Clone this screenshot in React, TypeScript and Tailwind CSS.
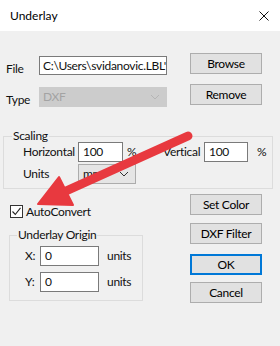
import React from "react";

const font = { fontFamily: 'Lato, "Noto Sans", sans-serif' };

function Button({ label, primary }: { label: string; primary?: boolean }) {
  return (
    <button
      className={
        "w-[72px] h-[21px] bg-[#e1e1e1] text-[12px] leading-none text-black flex items-center justify-center " +
        (primary ? "border-2 border-[#0078d7]" : "border border-[#adadad]")
      }
    >
      {label}
    </button>
  );
}

function Chevron({ color }: { color: string }) {
  return (
    <svg width="10" height="6" viewBox="0 0 10 6">
      <path d="M1 1 L5 5 L9 1" fill="none" stroke={color} strokeWidth="1" />
    </svg>
  );
}

export default function App(): JSX.Element {
  return (
    <div
      className="relative w-[280px] h-[346px] bg-[#f0f0f0] text-[12px] leading-[16px] text-[#111] tracking-[-0.3px] overflow-hidden"
      style={font}
    >
      {/* title bar */}
      <div className="h-[31px] bg-white flex items-center justify-between pl-[10px] pr-[11px] tracking-normal">
        <span className="text-[12px] text-black">Underlay</span>
        <svg width="10" height="10" viewBox="0 0 10 10">
          <path d="M0.5 0.5 L9.5 9.5 M9.5 0.5 L0.5 9.5" stroke="#111" strokeWidth="1" />
        </svg>
      </div>

      {/* file row */}
      <div className="flex h-[20px] mt-[22px] ml-[6px]">
        <span className="w-[33px] mt-[8px]">File</span>
        <div className="w-[128px] h-[19px] mt-[3px] bg-white border border-[#7a7a7a] pl-[3px] flex items-center overflow-hidden whitespace-nowrap">
          C:\Users\svidanovic.LBL'
        </div>
        <div className="ml-[23px]">
          <Button label="Browse" />
        </div>
      </div>

      {/* type row */}
      <div className="flex h-[20px] mt-[11px] ml-[6px]">
        <span className="w-[33px] mt-[8px]">Type</span>
        <div className="w-[128px] h-[20px] mt-[3px] bg-[#cccccc] border border-[#cccccc] pl-[3px] pr-[6px] flex items-center justify-between text-[#a3a3a3]">
          <span>DXF</span>
          <Chevron color="#b5b5b5" />
        </div>
        <div className="ml-[23px]">
          <Button label="Remove" />
        </div>
      </div>

      {/* scaling group */}
      <fieldset className="mt-[24px] ml-[3px] w-[270px] border border-[#dcdcdc] pl-[8px] pb-[4px]">
        <legend className="px-[1px] leading-[16px]">Scaling</legend>
        <div className="flex items-center -mt-[2px] ml-[11px] h-[20px]">
          <span className="w-[55px]">Horizontal</span>
          <div className="w-[45px] h-[20px] bg-white border border-[#7a7a7a] pl-[4px] flex items-center">100</div>
          <span className="w-[40px] pl-[4px]">%</span>
          <span className="w-[41px]">Vertical</span>
          <div className="w-[44px] h-[20px] bg-white border border-[#7a7a7a] pl-[4px] flex items-center">100</div>
          <span className="pl-[9px]">%</span>
        </div>
        <div className="flex items-center mt-[2px] ml-[11px] h-[20px]">
          <span className="w-[55px]">Units</span>
          <div className="w-[58px] h-[20px] bg-[#e5e5e5] border border-[#acacac] pl-[4px] pr-[6px] flex items-center justify-between">
            <span>mm</span>
            <Chevron color="#333" />
          </div>
        </div>
      </fieldset>

      {/* lower area */}
      <div className="flex ml-[9px]">
        <div className="w-[134px]">
          <label className="flex items-center mt-[16px] ml-[1px] h-[13px]">
            <span className="w-[13px] h-[13px] border border-[#333] bg-white flex items-center justify-center">
              <svg width="11" height="11" viewBox="0 0 11 11">
                <path d="M1.5 5.5 L4.3 8.5 L9.5 1.8" fill="none" stroke="#222" strokeWidth="1.1" />
              </svg>
            </span>
            <span className="ml-[3px]">AutoConvert</span>
          </label>

          <fieldset className="mt-[9px] w-[134px] border border-[#dcdcdc] pl-[7px] pb-[8px]">
            <legend className="px-[1px] leading-[16px]">Underlay Origin</legend>
            <div className="flex items-center mt-[3px] ml-[8px] h-[20px]">
              <span className="w-[15px]">X:</span>
              <div className="w-[59px] h-[20px] bg-white border border-[#7a7a7a] pl-[4px] flex items-center">0</div>
              <span className="ml-[8px]">units</span>
            </div>
            <div className="flex items-center mt-[6px] ml-[8px] h-[20px]">
              <span className="w-[15px]">Y:</span>
              <div className="w-[59px] h-[20px] bg-white border border-[#7a7a7a] pl-[4px] flex items-center">0</div>
              <span className="ml-[8px]">units</span>
            </div>
          </fieldset>
        </div>

        <div className="ml-[47px] mt-[5px] flex flex-col">
          <Button label="Set Color" />
          <div className="mt-[8px]">
            <Button label="DXF Filter" />
          </div>
          <div className="mt-[10px]">
            <Button label="OK" primary />
          </div>
          <div className="mt-[7px]">
            <Button label="Cancel" />
          </div>
        </div>
      </div>

      {/* red annotation arrow */}
      <svg
        className="absolute inset-0 pointer-events-none"
        width="280"
        height="346"
        viewBox="0 0 280 346"
      >
        <g fill="#e8393f" stroke="#e8393f">
          <line x1="188" y1="136" x2="66" y2="191" strokeWidth="9" strokeLinecap="round" />
          <polygon points="38,204 59,177 73,205" strokeWidth="2" strokeLinejoin="round" />
        </g>
      </svg>
    </div>
  );
}
